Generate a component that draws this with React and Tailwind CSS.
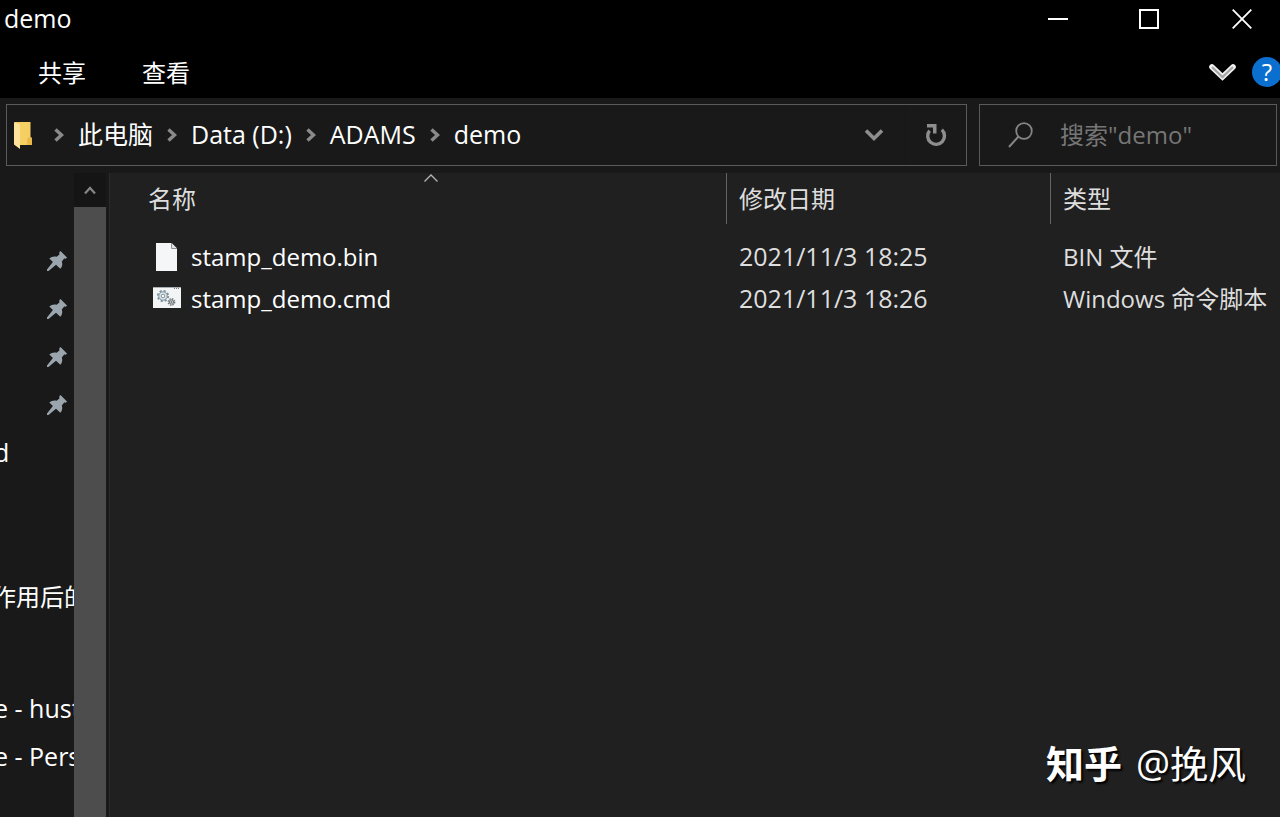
import React, { useState } from 'react'

const crumbs = ['此电脑', 'Data (D:)', 'ADAMS', 'demo']

const files = [
  { name: 'stamp_demo.bin', date: '2021/11/3 18:25', type: 'BIN 文件', icon: 'blank' },
  { name: 'stamp_demo.cmd', date: '2021/11/3 18:26', type: 'Windows 命令脚本', icon: 'script' },
]

const FolderIcon = () => (
  <svg width="18" height="28" viewBox="0 0 18 28" className="shrink-0" aria-hidden="true">
    <path d="M1 1h15.500v15l1.500 1v7H5z" fill="#f6cf63" />
    <path d="M15 16l3 1v7h-5v-6z" fill="#e9b94a" />
    <path d="M0 1l6 2.500v24.500L0 23.500z" fill="#fde49a" />
  </svg>
)

const CrumbArrow = () => (
  <svg width="10" height="14" viewBox="0 0 10 14" className="shrink-0" aria-hidden="true">
    <path d="M1.500 1.500L7.500 7l-6 5.500" fill="none" stroke="#8a8a8a" strokeWidth="3.400" />
  </svg>
)

const PinIcon = () => (
  <svg width="20" height="20" viewBox="0 0 20 20" className="shrink-0" aria-hidden="true">
    <path
      d="M13.500 0L20 6.500l-1.200 1.200-1.600-.2-2.400 3c.9 2.700.5 5.200-1.500 7.300l-4.300-4.100L1.500 20H0v-1.400l5.900-7.500L2.300 7.500c1.900-1.800 4.700-2.500 7.400-1.700l2.700-2.300-.1-2.200z"
      fill="#9aa5ad"
    />
  </svg>
)

const BlankFileIcon = () => (
  <svg width="28" height="28" viewBox="0 0 28 28" className="shrink-0" aria-hidden="true">
    <path d="M3 0h15.500L24 5.500V28H3z" fill="#f4f6f8" />
    <path d="M18.500 0v5.500H24" fill="#dfe3e6" stroke="#8b9094" strokeWidth="1" />
  </svg>
)

const ScriptFileIcon = () => (
  <svg width="28" height="28" viewBox="0 0 28 28" className="shrink-0" aria-hidden="true">
    <rect x="0" y="2" width="28" height="21" fill="#f2f4f5" />
    <path d="M0 2.500h28" stroke="#a9b0b4" />
    <path d="M21 3.500h6" stroke="#6f767a" strokeDasharray="1 1" />
    <circle cx="10" cy="11" r="5.200" fill="none" stroke="#7d929d" strokeWidth="1.800" strokeDasharray="2.200 1.880" />
    <circle cx="10" cy="11" r="4.200" fill="#dfe6ea" stroke="#7d929d" strokeWidth="1" />
    <circle cx="10" cy="11" r="1.800" fill="#fff" stroke="#7d929d" strokeWidth="1" />
    <circle cx="18.500" cy="17" r="3.200" fill="none" stroke="#737a7e" strokeWidth="1.400" strokeDasharray="1.500 1.010" />
    <circle cx="18.500" cy="17" r="2.200" fill="#c2c8cb" stroke="#737a7e" strokeWidth="1" />
    <circle cx="18.500" cy="17" r=".8" fill="#5e6468" />
  </svg>
)

const TitleBar = () => (
  <header className="flex h-[38px] items-center justify-between pl-1">
    <h1 className="text-[25px]">demo</h1>
    <div className="flex h-full">
      <button aria-label="最小化" className="flex w-[92px] items-center justify-center">
        <svg width="20" height="20" viewBox="0 0 20 20" aria-hidden="true">
          <path d="M0 10h20" stroke="#fff" strokeWidth="2" />
        </svg>
      </button>
      <button aria-label="最大化" className="flex w-[90px] items-center justify-center">
        <svg width="20" height="20" viewBox="0 0 20 20" aria-hidden="true">
          <rect x="1" y="1" width="18" height="18" fill="none" stroke="#fff" strokeWidth="2" />
        </svg>
      </button>
      <button aria-label="关闭" className="ml-[10px] flex w-[76px] items-center justify-center">
        <svg width="20" height="20" viewBox="0 0 20 20" aria-hidden="true">
          <path d="M.7.7l18.600 18.600M19.300.7L.7 19.300" stroke="#fff" strokeWidth="1.800" />
        </svg>
      </button>
    </div>
  </header>
)

const Ribbon = () => (
  <div className="flex h-[60px] items-center justify-between overflow-hidden pt-[10px]">
    <nav className="flex gap-14 pl-[38px]">
      <button>共享</button>
      <button>查看</button>
    </nav>
    <div className="-mr-[2px] flex items-center gap-4 pb-[2px]">
      <button aria-label="展开功能区">
        <svg width="27" height="17" viewBox="0 0 27 17" aria-hidden="true">
          <path d="M3 3l10.500 10L24 3" fill="none" stroke="#f2f2f2" strokeWidth="5.600" strokeLinecap="round" />
          <path d="M3 3l10.500 10L24 3" fill="none" stroke="#a6a6a6" strokeWidth="2.400" />
        </svg>
      </button>
      <button
        aria-label="帮助"
        className="flex size-[30px] items-center justify-center rounded-full bg-[#0b6fd0] text-2xl leading-6 text-white"
      >
        ?
      </button>
    </div>
  </div>
)

const AddressBar = () => {
  const [query, setQuery] = useState('')

  return (
    <div className="flex h-[75px] items-start gap-3 bg-[#191919] pl-[6px] pr-[3px] pt-[6px]">
      <div className="flex h-[62px] min-w-0 flex-1 items-center border border-[#5a5a5a] pl-[7px]">
        <FolderIcon />
        <ol className="ml-[22px] flex items-center gap-[14px] text-[25px]">
          {crumbs.map((crumb) => (
            <li key={crumb} className="flex items-center gap-[14px]">
              <CrumbArrow />
              <a href="#" className="whitespace-nowrap">{crumb}</a>
            </li>
          ))}
        </ol>
        <button aria-label="历史记录" className="ml-auto flex h-full w-16 items-center justify-center border-r border-[#161616]">
          <svg width="20" height="14" viewBox="0 0 20 14" aria-hidden="true">
            <path d="M2 2.500l8 8 8-8" fill="none" stroke="#8e8e8e" strokeWidth="3.600" />
          </svg>
        </button>
        <button aria-label="刷新" className="flex h-full w-[60px] items-center justify-center">
          <svg width="22" height="24" viewBox="0 0 22 24" aria-hidden="true">
            <path d="M4.600 7.600A8.400 8.400 0 1 0 16.800 6.800" fill="none" stroke="#8e8e8e" strokeWidth="3.400" />
            <path d="M2 1h9.500v9.500h-3.500V4.500H2z" fill="#8e8e8e" />
          </svg>
        </button>
      </div>

      <label className="flex h-[62px] w-[298px] shrink-0 items-center gap-[27px] border border-[#5a5a5a] pl-7">
        <svg width="25" height="26" viewBox="0 0 25 26" className="shrink-0" role="img" aria-label="搜索">
          <circle cx="16" cy="9" r="7.800" fill="none" stroke="#858585" strokeWidth="1.800" />
          <path d="M10.500 14.500L1 25" stroke="#858585" strokeWidth="2" />
        </svg>
        <input
          type="text"
          value={query}
          onChange={(e) => setQuery(e.target.value)}
          placeholder={'搜索"demo"'}
          className="w-full min-w-0 bg-transparent outline-none placeholder:text-[#767676]"
        />
      </label>
    </div>
  )
}

const Sidebar = () => (
  <aside className="flex w-[110px] shrink-0 border-r border-[#2b2b2b] bg-[#191919]">
    <nav className="w-[74px] overflow-hidden whitespace-nowrap pt-16">
      {[1, 2, 3, 4].map((n) => (
        <a key={n} href="#" aria-label={`固定项 ${n}`} className="flex h-12 items-center justify-end pr-[7px]">
          <PinIcon />
        </a>
      ))}
      <a href="#" className="-ml-[6px] flex h-12 items-center text-[25px]">d</a>
      <a href="#" className="-ml-2 mt-24 flex h-12 items-center">作用后的</a>
      <a href="#" className="-ml-[6px] mt-16 flex h-12 items-center text-[25px]">e - hust</a>
      <a href="#" className="-ml-[6px] flex h-12 items-center text-[25px]">e - Pers</a>
    </nav>
    <div className="flex w-8 flex-col bg-[#4d4d4d]">
      <button aria-label="向上滚动" className="flex h-[34px] items-center justify-center bg-[#151515]">
        <svg width="12" height="10" viewBox="0 0 12 10" aria-hidden="true">
          <path d="M1 8.500l5-5.500 5 5.500" fill="none" stroke="#858585" strokeWidth="2.200" />
        </svg>
      </button>
    </div>
  </aside>
)

const FileList = () => (
  <main className="min-w-0 flex-1 overflow-hidden bg-[#202020]">
    <table className="w-full table-fixed border-separate border-spacing-0 whitespace-nowrap text-left text-[#dedede]">
      <colgroup>
        <col />
        <col className="w-[324px]" />
        <col className="w-[230px]" />
      </colgroup>
      <thead>
        <tr className="h-[51px]">
          <th className="relative pl-[38px] font-normal">
            名称
            <svg width="14" height="8" viewBox="0 0 14 8" className="absolute left-[314px] top-px" aria-hidden="true">
              <path d="M.5 7.500L7 1l6.500 6.500" fill="none" stroke="#b5b5b5" strokeWidth="1.300" />
            </svg>
          </th>
          <th className="border-l border-[#636363] pl-3 font-normal">修改日期</th>
          <th className="border-l border-[#636363] pl-3 font-normal">类型</th>
        </tr>
      </thead>
      <tbody className="before:block before:h-3 before:content-['']">
        {files.map((file) => (
          <tr key={file.name} className="h-[42px]">
            <td className="pl-[43px] text-white">
              <div className="flex items-center gap-[10px]">
                {file.icon === 'blank' ? <BlankFileIcon /> : <ScriptFileIcon />}
                {file.name}
              </div>
            </td>
            <td className="pl-[13px] text-[25px]">{file.date}</td>
            <td className="pl-[13px]">{file.type}</td>
          </tr>
        ))}
      </tbody>
    </table>
  </main>
)

const App = () => {
  return (
    <div
      lang="zh-CN"
      className="relative flex min-h-screen flex-col overflow-hidden bg-black font-['Open_Sans','Noto_Sans_CJK_SC',sans-serif] text-2xl text-white"
    >
      <TitleBar />
      <Ribbon />
      <AddressBar />
      <div className="flex flex-1">
        <Sidebar />
        <FileList />
      </div>

      {/* Watermark */}
      <p className="absolute bottom-6 right-[34px] flex items-center gap-[14px] text-[38px] leading-[60px] [text-shadow:2px_2px_2px_#000]">
        <span className="font-bold">知乎</span>
        <span>@挽风</span>
      </p>
    </div>
  )
}

export default App
